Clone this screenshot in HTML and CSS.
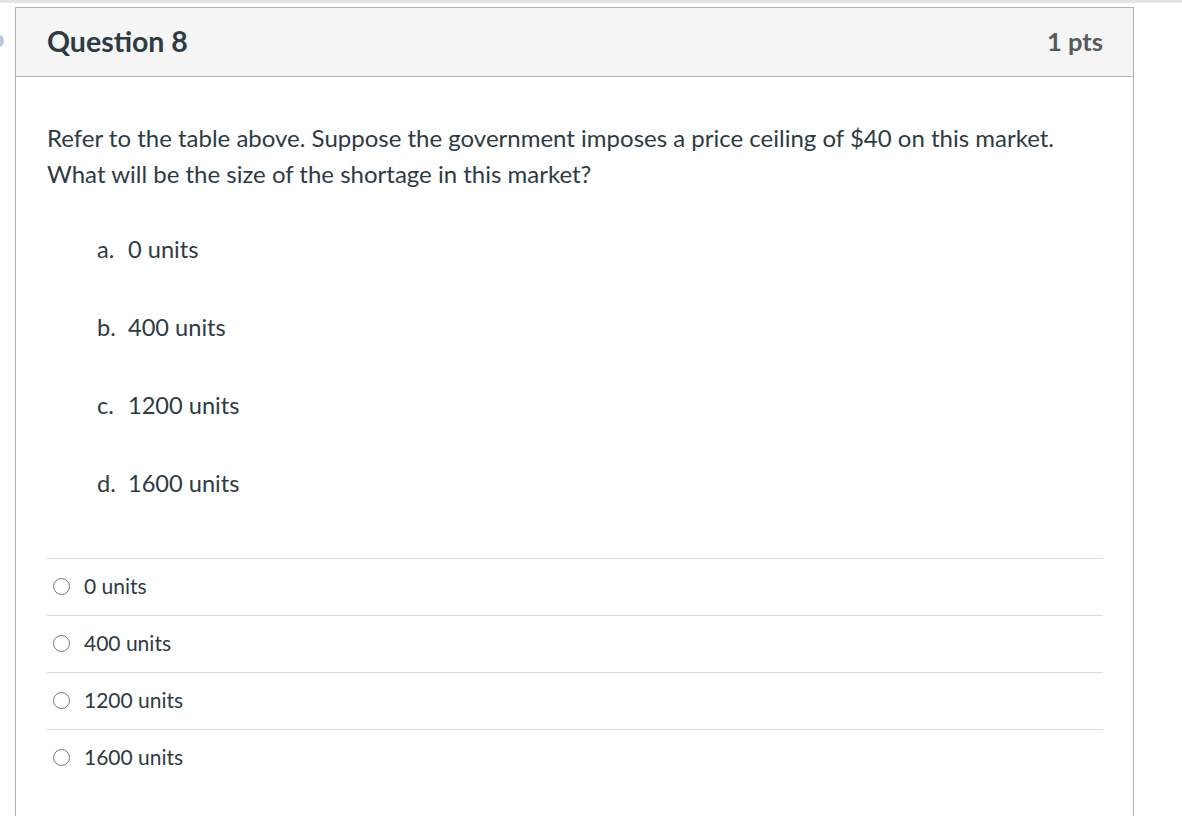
FILE: index.html
```html
<!DOCTYPE html>
<html lang="en">
<head>
<meta charset="utf-8">
<title>Question 8</title>
<link rel="stylesheet" href="styles.css">
</head>
<body>
<div class="topbar"></div>
<div class="edge-mark"></div>
<div class="page">
  <div class="question">
    <div class="header">
      <span class="title">Question 8</span>
      <span class="points">1 pts</span>
    </div>
    <div class="body">
      <p class="text">Refer to the table above. Suppose the government imposes a price ceiling of $40 on this market. What will be the size of the shortage in this market?</p>
      <ol class="choices">
        <li><span class="letter">a.</span>0 units</li>
        <li><span class="letter">b.</span>400 units</li>
        <li><span class="letter">c.</span>1200 units</li>
        <li><span class="letter">d.</span>1600 units</li>
      </ol>
      <div class="answers">
        <label class="answer"><span class="radio"></span><span>0 units</span></label>
        <label class="answer"><span class="radio"></span><span>400 units</span></label>
        <label class="answer"><span class="radio"></span><span>1200 units</span></label>
        <label class="answer"><span class="radio"></span><span>1600 units</span></label>
      </div>
    </div>
  </div>
</div>
</body>
</html>
```
FILE: styles.css
```css
html, body {
  margin: 0;
  padding: 0;
  background: #fff;
  font-family: Lato, "Noto Sans", sans-serif;
  color: #2d3b45;
}
body {
  position: relative;
  height: 816px;
  overflow: hidden;
}
.topbar {
  height: 3px;
  background: #e4e4e4;
}
.edge-mark {
  position: absolute;
  left: -6px;
  top: 35px;
  width: 10px;
  height: 12px;
  border-radius: 50%;
  background: #b9c9d9;
}
.page {
  padding: 4px 0 0 15px;
}
.question {
  width: 1117px;
  border: 1px solid #aeb3b6;
  border-bottom: none;
  min-height: 900px;
}
.header {
  height: 69px;
  box-sizing: border-box;
  padding: 0 30px 2px 31px;
  background: #f5f5f5;
  border-bottom: 1px solid #aeb3b6;
  display: flex;
  align-items: center;
  justify-content: space-between;
}
.title {
  font-size: 28.5px;
  font-weight: 700;
  color: #2d3b45;
}
.points {
  font-size: 25.5px;
  font-weight: 700;
  color: #565a5c;
}
.body {
  padding: 43px 30px 0 31px;
}
.text {
  margin: 0;
  font-size: 24px;
  line-height: 36px;
}
.choices {
  list-style: none;
  margin: 39px 0 0 0;
  padding: 0 0 0 50px;
  display: flex;
  flex-direction: column;
  gap: 42px;
}
.choices li {
  font-size: 23.6px;
  line-height: 36px;
}
.letter {
  display: inline-block;
  width: 31px;
}
.answers {
  margin-top: 57px;
}
.answer {
  display: flex;
  align-items: center;
  height: 53px;
  padding-bottom: 3px;
  border-top: 1px solid #dcdcdc;
  font-size: 21px;
}
.radio {
  width: 15px;
  height: 15px;
  border: 1px solid #777;
  border-radius: 50%;
  margin: 2px 14px 0 6px;
  flex: none;
}
```
